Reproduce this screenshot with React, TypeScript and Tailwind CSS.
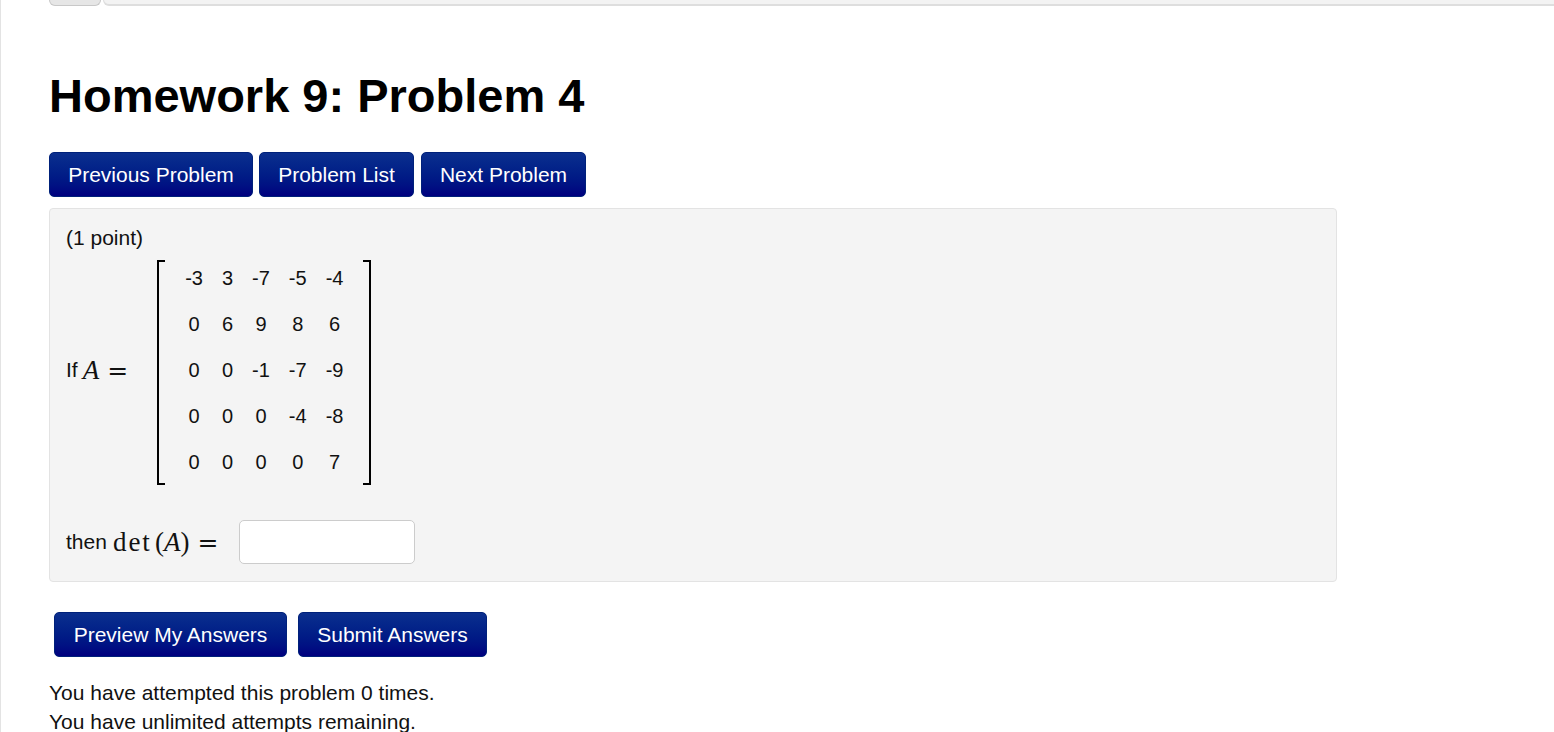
const rows = [
  ['-3', '3', '-7', '-5', '-4'],
  ['0', '6', '9', '8', '6'],
  ['0', '0', '-1', '-7', '-9'],
  ['0', '0', '0', '-4', '-8'],
  ['0', '0', '0', '0', '7'],
];

const btn =
  'h-[45px] rounded-[5px] border border-[#00217a] bg-gradient-to-b from-[#0c2f8e] to-[#00007f] text-[21px] leading-none text-white';

const serif = "font-['Liberation_Serif',serif] text-[27px] leading-none";
const eq = "font-['DejaVu_Serif',serif] text-[25px] leading-none";

function Matrix() {
  return (
    <div className="flex items-stretch">
      <div className="mt-[5px] w-[8px] border-y-2 border-l-2 border-black" />
      <div className="grid grid-cols-[repeat(5,auto)] justify-items-center gap-x-[19px] px-[20px]">
        {rows.flat().map((v, i) => (
          <div key={i} className="flex h-[46px] items-center text-[20px]">
            {v}
          </div>
        ))}
      </div>
      <div className="mt-[5px] w-[8px] border-y-2 border-r-2 border-black" />
    </div>
  );
}

export default function App() {
  return (
    <div className="min-h-[732px] border-l border-[#e3e3e3] bg-white font-['Liberation_Sans',Arial,sans-serif] text-[21px] text-[#111]">
      {/* clipped bar at the top */}
      <div className="flex pl-[48px]">
        <div className="h-[6px] w-[52px] rounded-b-[6px] border border-t-0 border-[#c8c8c8] bg-[#e6e6e6]" />
        <div className="ml-[2px] h-[6px] flex-1 rounded-bl-[6px] border-b-2 border-l border-[#dedede] bg-[#f3f3f3]" />
      </div>

      <div className="pl-[48px]">
        <h1 className="mt-[64px] text-[47px] font-bold leading-[52px] text-black">Homework 9: Problem 4</h1>

        <div className="mt-[30px] flex">
          <button className={`${btn} w-[204px]`}>Previous Problem</button>
          <button className={`${btn} ml-[6px] w-[155px]`}>Problem List</button>
          <button className={`${btn} ml-[7px] w-[165px]`}>Next Problem</button>
        </div>

        <div className="mt-[11px] w-[1288px] rounded-[4px] border border-[#e3e3e3] bg-[#f4f4f4] px-[16px] pb-[17px] pt-[14px]">
          <div className="leading-[30px]">(1 point)</div>
          <div className="mt-[2px] flex items-center">
            <span>If</span>
            <span className={`${serif} ml-[5px] italic`}>A</span>
            <span className={`${eq} ml-[8px]`}>=</span>
            <div className="ml-[29px]">
              <Matrix />
            </div>
          </div>
          <div className="mt-[35px] flex items-center">
            <span>then</span>
            <span className={`${serif} ml-[6px] tracking-[2px]`}>det</span>
            <span className={`${serif} ml-[3px]`}>
              (<span className="italic">A</span>)
            </span>
            <span className={`${eq} ml-[8px]`}>=</span>
            <input className="ml-[21px] h-[44px] w-[176px] rounded-[5px] border border-[#cccccc] bg-white px-2 outline-none" />
          </div>
        </div>

        <div className="ml-[5px] mt-[30px] flex gap-[11px]">
          <button className={`${btn} w-[233px]`}>Preview My Answers</button>
          <button className={`${btn} w-[189px]`}>Submit Answers</button>
        </div>

        <div className="mt-[21px] leading-[29px]">
          <p>You have attempted this problem 0 times.</p>
          <p>You have unlimited attempts remaining.</p>
        </div>
      </div>
    </div>
  );
}
